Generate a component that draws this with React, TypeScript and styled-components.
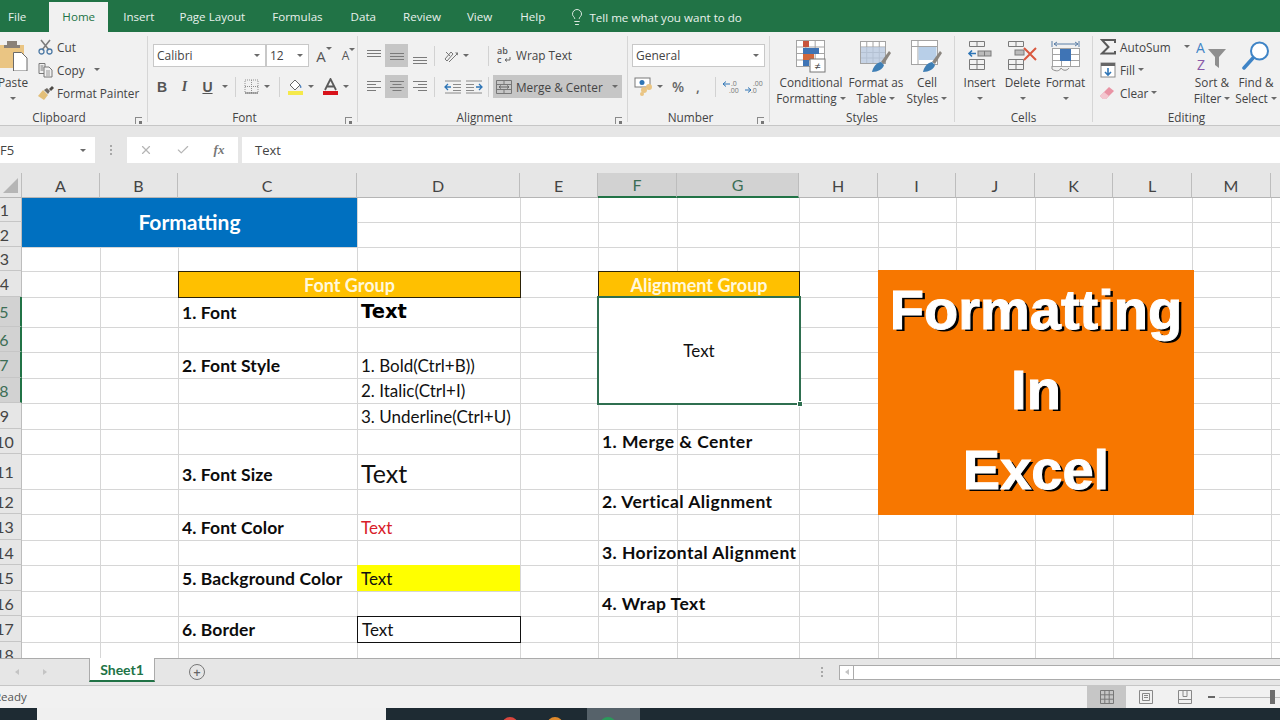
import { FC, ReactNode } from "react";
import styled, { createGlobalStyle } from "styled-components";
import { Check, Lightbulb, X } from "lucide-react";

const GREEN = "#217346";
const UI_FONT = `"Open Sans", "Liberation Sans", sans-serif`;
const SHEET_FONT = `Lato, "Open Sans", sans-serif`;

const GlobalStyle = createGlobalStyle`
    html, body {
        margin: 0;
        padding: 0;
        overflow: hidden;
        background: #ffffff;
    }
`;

/* ---------- drawn icons ---------- */

const Svg: FC<{ w: number; h: number; children: ReactNode }> = ({ w, h, children }) => (
    <svg width={w} height={h} viewBox={`0 0 ${w} ${h}`} fill="none">
        {children}
    </svg>
);

const PasteIcon = () => (
    <Svg w={29} h={31}>
        <rect x="0" y="5" width="25" height="23" fill="#eac583" />
        <rect x="8" y="1" width="10" height="6" fill="#8a8178" />
        <rect x="5" y="5" width="16" height="3" fill="#8a8178" />
        <path d="M14.5 12.5h8l5.5 5.500v13h-13.500z" fill="#fff" stroke="#6a6a6a" />
    </Svg>
);

const CutIcon = () => (
    <Svg w={16} h={16}>
        <path d="M3 1l8 10M12 1L4 11" stroke="#7d7d7d" strokeWidth="1.600" />
        <circle cx="3.500" cy="12.500" r="2.500" stroke="#4f7ba6" strokeWidth="1.300" />
        <circle cx="11.500" cy="12.500" r="2.500" stroke="#4f7ba6" strokeWidth="1.300" />
    </Svg>
);

const CopyIcon = () => (
    <Svg w={16} h={16}>
        <path d="M1 1.500h6v10H1zM2.500 4h3M2.500 6h3M2.500 8h3" stroke="#777" />
        <path d="M6 5h5l3 3v7H6z" fill="#f1f1f1" stroke="#777" />
        <path d="M8 9h4M8 11h4M8 13h4" stroke="#999" />
    </Svg>
);

const PainterIcon = () => (
    <Svg w={16} h={14}>
        <path d="M0 10l5-6 5 5-4 5z" fill="#e3bf78" />
        <path d="M6 4l3-2 3 3-2 3z" fill="#6f6a64" />
        <path d="M11 3l3-3 2 2-3 3z" fill="#4d4a46" />
    </Svg>
);

const BordersIcon = () => (
    <Svg w={15} h={15}>
        <path d="M1 1h13v13H1zM7.500 1v13M1 7.500h13" stroke="#8f8f8f" strokeDasharray="1 1" />
        <path d="M1 14h13" stroke="#6f6f6f" />
    </Svg>
);

const FillIcon = () => (
    <Svg w={17} h={17}>
        <path d="M3 7l5-5 5 5-5 5z" fill="#fff" stroke="#666" />
        <path d="M13 6.500c1.500 1.500 2 3 1 3.500s-1.500-1.500-1-3.500z" fill="#4f81bd" />
        <rect x="1" y="13" width="15" height="4" fill="#f5e94a" />
    </Svg>
);

const FontColorIcon = () => (
    <Svg w={17} h={17}>
        <path d="M3 12L8.500 1 14 12M5 8.500h7" stroke="#5a5a5a" strokeWidth="1.800" />
        <rect x="1" y="13" width="15" height="4" fill="#d8121a" />
    </Svg>
);

const AlignIcon: FC<{ rows: [number, number, number][] }> = ({ rows }) => (
    <Svg w={16} h={16}>
        {rows.map(([x, y, w], i) => (
            <rect key={i} x={x} y={y} width={w} height="1" fill="#7b7b7b" />
        ))}
    </Svg>
);

const vertRows = (top: number): [number, number, number][] => [
    [1, top, 14],
    [1, top + 3, 14],
    [1, top + 6, 14],
];

const OrientationIcon = () => (
    <Svg w={16} h={14}>
        <path d="M2 10l6-7 2 2-6 7zM3 3l4 4" stroke="#777" />
        <path d="M6 13l9-9" stroke="#777" />
        <path d="M15 3.500v3l-3-3z" fill="#777" />
    </Svg>
);

const IndentIcon: FC<{ flip?: boolean }> = ({ flip }) => (
    <Svg w={17} h={14}>
        <g transform={flip ? "translate(17 0) scale(-1 1)" : undefined}>
            <path d="M1 1h16M9 4.500h8M9 7.500h8M9 10.500h8M1 13h16" stroke="#8a8a8a" />
            <path d="M1 7h6M4 4l-3 3 3 3" stroke="#2e75b6" strokeWidth="1.300" />
        </g>
    </Svg>
);

const WrapIcon = () => (
    <Svg w={15} h={18}>
        <text x="0" y="7.500" fontSize="9" fontWeight="600" fill="#555" fontFamily={UI_FONT}>ab</text>
        <text x="0" y="17" fontSize="9" fontWeight="600" fill="#555" fontFamily={UI_FONT}>c</text>
        <path d="M13 11v3H8M10 12.500L8 14l2 1.500" stroke="#666" />
    </Svg>
);

const MergeIcon = () => (
    <Svg w={16} h={14}>
        <path d="M.5.500h15v13H.5zM.5 4.500h15M.5 9.500h15M8 .500v4M8 9.500v4" stroke="#777" />
        <path d="M3 7h10M5 5.500L3 7l2 1.500M11 5.500L13 7l-2 1.500" stroke="#666" />
    </Svg>
);

const AccountingIcon = () => (
    <Svg w={19} h={19}>
        <rect x="1" y="1" width="15" height="9" fill="#fff" stroke="#7a7a7a" />
        <circle cx="8" cy="5.500" r="2.500" fill="#2e75b6" />
        <circle cx="10" cy="13" r="3" fill="#eac583" />
        <circle cx="15" cy="10" r="3" fill="#eac583" />
        <circle cx="8" cy="17" r="2" fill="#eac583" />
    </Svg>
);

const DecimalIcon: FC<{ top: string; bottom: string; arrowTop?: boolean }> = ({ top, bottom, arrowTop }) => (
    <Svg w={20} h={15}>
        <text x="9" y="6.500" fontSize="7" fill="#777" fontFamily={UI_FONT}>{top}</text>
        <text x="7" y="14" fontSize="7" fill="#777" fontFamily={UI_FONT}>{bottom}</text>
        <path d={arrowTop ? "M1 5h7M4 2.500L1 5l3 2.500" : "M1 11h6M4 8.500L7 11l-3 2.500"} stroke="#2e75b6" />
    </Svg>
);

const Table: FC<{ x: number; y: number; w: number; h: number; cols: number; rows: number }> = ({ x, y, w, h, cols, rows }) => (
    <g stroke="#a3a3a3">
        <rect x={x + 0.5} y={y + 0.5} width={w} height={h} fill="#fff" />
        {Array.from({ length: cols - 1 }, (_, i) => (
            <path key={i} d={`M${x + 0.5 + ((i + 1) * w) / cols} ${y}v${h}`} />
        ))}
        {Array.from({ length: rows - 1 }, (_, i) => (
            <path key={i} d={`M${x} ${y + 0.5 + ((i + 1) * h) / rows}h${w}`} />
        ))}
    </g>
);

const Brush = () => (
    <>
        <path d="M21 22l8-11 2 2-7 11z" fill="#8b8680" />
        <path d="M12 32c1-5 4-9 9-10l3 3c-1 4-6 7-12 7z" fill="#3f7fb5" />
    </>
);

const ConditionalIcon = () => (
    <Svg w={32} h={33}>
        <Table x={1} y={0} w={28} h={26} cols={3} rows={4} />
        <rect x="8" y="1" width="6" height="6" fill="#c8553d" />
        <rect x="8" y="8" width="16" height="6" fill="#3f74b5" />
        <rect x="8" y="14" width="11" height="6" fill="#d0683d" />
        <rect x="8" y="20" width="6" height="6" fill="#3f74b5" />
        <rect x="15" y="19" width="15" height="13" fill="#fff" stroke="#777" />
        <text x="22.500" y="29.500" fontSize="11" textAnchor="middle" fill="#444" fontFamily={UI_FONT}>≠</text>
    </Svg>
);

const FormatTableIcon = () => (
    <Svg w={32} h={33}>
        <Table x={0} y={1} w={25} h={22} cols={4} rows={4} />
        <rect x="1" y="7" width="24" height="16" fill="#b8c8de" opacity="0.8" />
        <Brush />
    </Svg>
);

const CellStylesIcon = () => (
    <Svg w={32} h={33}>
        <Table x={0} y={0} w={26} h={24} cols={1} rows={1} />
        <path d="M0 6.500h26M7 0v24" stroke="#a3a3a3" />
        <rect x="7.500" y="7" width="18" height="13" fill="#b8cfe8" />
        <Brush />
    </Svg>
);

const InsertIcon = () => (
    <Svg w={30} h={30}>
        <path d="M4.500 1.500h15v5h-15zM12 1.500v5M4.500 19.500h15v10h-15zM4.500 24.500h15M12 19.500v10" stroke="#7a7a7a" />
        <rect x="13" y="11" width="13" height="5" fill="#bbb" stroke="#7a7a7a" />
        <path d="M19.500 11v5" stroke="#7a7a7a" />
        <path d="M11 13.500H4M7 10.500l-3 3 3 3" stroke="#2e75b6" strokeWidth="1.600" />
    </Svg>
);

const DeleteIcon = () => (
    <Svg w={32} h={30}>
        <path d="M1.500 1.500h15v5h-15zM9 1.500v5M1.500 19.500h15v10h-15zM1.500 24.500h15M9 19.500v10" stroke="#7a7a7a" />
        <rect x="8" y="10" width="9" height="5" fill="#bbb" stroke="#7a7a7a" />
        <path d="M17 8l12 12M29 8L17 20" stroke="#d9583f" strokeWidth="2" />
    </Svg>
);

const FormatCellsIcon = () => (
    <Svg w={30} h={32}>
        <path d="M1 1v6M28 1v6M3 4h24M6 2L3 4l3 2M24 2l3 2-3 2" stroke="#5b7ea6" />
        <Table x={1} y={8} w={27} h={18} cols={3} rows={3} />
        <rect x="9" y="9" width="11" height="12" fill="#3f74b5" />
        <path d="M1 26v3c4 3 8 2 9-1 2 3 6 3 8 0" stroke="#8f8f8f" />
    </Svg>
);

const SigmaIcon = () => (
    <Svg w={16} h={16}>
        <path d="M15 4V1H2l6.500 7L2 14.500h13V12" stroke="#5a5a5a" strokeWidth="2" />
    </Svg>
);

const FillDownIcon = () => (
    <Svg w={16} h={16}>
        <rect x="1" y="1" width="14" height="14" fill="#fff" stroke="#8a8a8a" />
        <rect x="1" y="1" width="14" height="3" fill="#666" />
        <path d="M8 6v7M5 10l3 3 3-3" stroke="#2e75b6" strokeWidth="1.600" />
    </Svg>
);

const EraserIcon = () => (
    <Svg w={15} h={14}>
        <path d="M0 10l9-9 5 4-8 8H3z" fill="#e993a4" />
        <path d="M0 10l4-4 5 4-3 3H3z" fill="#f3c6cf" />
    </Svg>
);

const SortIcon = () => (
    <Svg w={32} h={32}>
        <text x="0" y="13" fontSize="14" fill="#3f84c6" fontFamily={UI_FONT}>A</text>
        <text x="1" y="30" fontSize="14" fill="#8a5aa8" fontFamily={UI_FONT}>Z</text>
        <path d="M12 9h18l-7 8v11l-4-3v-8z" fill="#8f8f8f" />
    </Svg>
);

const FindIcon = () => (
    <Svg w={30} h={30}>
        <circle cx="18.500" cy="11" r="8.500" fill="#fff" stroke="#3f84c6" strokeWidth="2" />
        <path d="M12 18L3 28" stroke="#3f84c6" strokeWidth="3.500" strokeLinecap="round" />
    </Svg>
);

/* ---------- title bar ---------- */

const TabBar = styled.nav`
    height: 32px;
    flex: none;
    display: flex;
    align-items: flex-end;
    padding-left: 8px;
    background: ${GREEN};
    font: 11.6px ${UI_FONT};
    color: #e8f1ec;
`;

const Tab = styled.div<{ $active?: boolean; $gap: number }>`
    height: 30px;
    line-height: 30px;
    margin-right: ${(p) => p.$gap}px;
    padding: ${(p) => (p.$active ? "0 13px" : "0")};
    background: ${(p) => (p.$active ? "#f1f1f1" : "transparent")};
    color: ${(p) => (p.$active ? GREEN : "inherit")};
`;

const TellMe = styled.div`
    display: flex;
    align-items: center;
    gap: 3px;
    height: 30px;
    margin-left: -3px;
`;

/* ---------- ribbon ---------- */

const Ribbon = styled.section`
    height: 94px;
    flex: none;
    box-sizing: border-box;
    display: flex;
    padding-top: 4px;
    background: #f1f1f1;
    border-bottom: 1px solid #c6c6c6;
    font: 11.8px ${UI_FONT};
    color: #444444;
`;

const Group = styled.div<{ $w: number; $last?: boolean }>`
    position: relative;
    flex: none;
    box-sizing: border-box;
    width: ${(p) => p.$w}px;
    height: 86px;
    border-right: ${(p) => (p.$last ? "none" : "1px solid #d6d6d6")};
    display: flex;
    flex-direction: column;
`;

const GroupBody = styled.div<{ $pl?: number; $stack?: boolean; $gap?: number }>`
    height: 74px;
    box-sizing: border-box;
    padding-left: ${(p) => p.$pl ?? 0}px;
    padding-top: ${(p) => (p.$stack ? 8 : 0)}px;
    display: flex;
    flex-direction: ${(p) => (p.$stack ? "column" : "row")};
    gap: ${(p) => p.$gap ?? 0}px;
`;

const GroupLabel = styled.div<{ $pr?: number }>`
    height: 12px;
    line-height: 15px;
    text-align: center;
    padding-right: ${(p) => p.$pr ?? 0}px;
`;

const Launcher = styled.i`
    position: absolute;
    right: 5px;
    bottom: -2px;
    width: 6px;
    height: 6px;
    border-left: 1px solid #8a8a8a;
    border-top: 1px solid #8a8a8a;
    &::after {
        content: "";
        position: absolute;
        right: 0;
        bottom: 0;
        width: 3px;
        height: 3px;
        background: #777;
    }
`;

const ToolRow = styled.div<{ $ml?: number }>`
    height: 23px;
    display: flex;
    align-items: center;
    margin-left: ${(p) => p.$ml ?? 0}px;
`;

const Slot = styled.div<{ $w: number; $active?: boolean }>`
    width: ${(p) => p.$w}px;
    height: 23px;
    flex: none;
    display: flex;
    align-items: center;
    justify-content: center;
    background: ${(p) => (p.$active ? "#c6c6c6" : "transparent")};
`;

const Caret = styled.i`
    display: inline-block;
    flex: none;
    border-left: 3px solid transparent;
    border-right: 3px solid transparent;
    border-top: 3px solid #6a6a6a;
`;

const Divider = styled.i<{ $l: number; $r: number }>`
    flex: none;
    width: 1px;
    height: 20px;
    margin: 0 ${(p) => p.$r}px 0 ${(p) => p.$l}px;
    background: #d2d2d2;
`;

const Combo = styled.div<{ $w: number }>`
    width: ${(p) => p.$w}px;
    height: 23px;
    flex: none;
    box-sizing: border-box;
    display: flex;
    align-items: center;
    justify-content: space-between;
    padding: 0 5px 0 3px;
    background: #ffffff;
    border: 1px solid #c8c8c8;
    font-size: 12px;
`;

const BigButton = styled.div<{ $w: number }>`
    width: ${(p) => p.$w}px;
    flex: none;
    display: flex;
    flex-direction: column;
    align-items: center;
    padding-top: 4px;
`;

const BigIcon = styled.div`
    height: 32px;
    margin-bottom: 2px;
    display: flex;
    justify-content: center;
`;

const BigLine = styled.div`
    height: 16px;
    line-height: 16px;
    white-space: nowrap;
    display: flex;
    align-items: center;
    justify-content: center;
    gap: 3px;
`;

const SmallColumn = styled.div<{ $w: number; $ml: number }>`
    width: ${(p) => p.$w}px;
    height: 69px;
    margin-left: ${(p) => p.$ml}px;
    margin-top: -1px;
    flex: none;
    display: flex;
    flex-direction: column;
`;

const SmallAction = styled.div<{ $icon: number; $caretGap?: number }>`
    height: 23px;
    display: flex;
    align-items: center;
    white-space: nowrap;
    & > span:first-child {
        width: ${(p) => p.$icon}px;
        flex: none;
        display: flex;
        align-items: center;
    }
    ${Caret} {
        margin-left: ${(p) => p.$caretGap ?? 3}px;
    }
`;

const GrowLetter = styled.span<{ $size: number }>`
    position: relative;
    font-size: ${(p) => p.$size}px;
    color: #555;
    ${Caret} {
        position: absolute;
        top: 1px;
        right: -6px;
    }
`;

const StyleTool = styled.span<{ $kind: "b" | "i" | "u" }>`
    font-family: ${(p) => (p.$kind === "i" ? `"Liberation Serif", serif` : `"Liberation Sans", sans-serif`)};
    font-weight: 700;
    font-size: 14px;
    color: #555;
    font-style: ${(p) => (p.$kind === "i" ? "italic" : "normal")};
    text-decoration: ${(p) => (p.$kind === "u" ? "underline" : "none")};
`;

const PercentMark = styled.span<{ $size: number }>`
    font-size: ${(p) => p.$size}px;
    font-weight: 600;
    color: #666;
`;

const MergeButton = styled.div`
    width: 129px;
    height: 23px;
    flex: none;
    box-sizing: border-box;
    display: flex;
    align-items: center;
    gap: 4px;
    padding-left: 3px;
    background: #c6c6c6;
    white-space: nowrap;
    ${Caret} {
        margin-left: 5px;
    }
`;

const WrapButton = styled.div`
    display: flex;
    align-items: center;
    gap: 4px;
    white-space: nowrap;
    padding-left: 4px;
    margin-top: -1px;
`;

/* ---------- formula bar ---------- */

const FormulaStrip = styled.section`
    height: 47px;
    flex: none;
    box-sizing: border-box;
    padding-top: 11px;
    background: #e6e6e6;
    display: flex;
    font: 12px ${UI_FONT};
    color: #444;
`;

const FormulaBox = styled.div<{ $w?: number; $ml: number }>`
    height: 26px;
    box-sizing: border-box;
    margin-left: ${(p) => p.$ml}px;
    width: ${(p) => (p.$w ? `${p.$w}px` : "auto")};
    flex: ${(p) => (p.$w ? "none" : "1")};
    background: #ffffff;
    display: flex;
    align-items: center;
    justify-content: space-between;
    padding: 0 9px 0 0;
    font-size: 13px;
`;

const GripDots = styled.i<{ $l: number }>`
    width: 2px;
    height: 10px;
    flex: none;
    margin: 8px 0 0 ${(p) => p.$l}px;
    background: repeating-linear-gradient(#a8a8a8 0 2px, transparent 2px 4px);
`;

const FxMark = styled.span`
    font: italic 700 13px "Liberation Serif", serif;
    color: #777;
`;

/* ---------- sheet ---------- */

const Sheet = styled.main`
    position: relative;
    flex: 1;
    min-height: 0;
    overflow: hidden;
    background: #ffffff;
`;

const COLS = [22, 78, 78, 179, 163, 78, 79, 122, 79, 78, 79, 78, 79, 79, 80];
const ROWS = [25, 24, 25, 24, 26, 30, 25, 26, 25, 26, 25, 35, 25, 26, 25, 26, 25, 26, 25];
const LETTERS = ["A", "B", "C", "D", "E", "F", "G", "H", "I", "J", "K", "L", "M", "N"];

const Grid = styled.div`
    display: grid;
    grid-template-columns: ${COLS.map((c) => `${c}px`).join(" ")};
    grid-template-rows: ${ROWS.map((r) => `${r}px`).join(" ")};
    font: 17px ${SHEET_FONT};
    color: #111;
`;

const GridCell = styled.div<{ $c: number; $r: number }>`
    grid-column: ${(p) => p.$c};
    grid-row: ${(p) => p.$r};
    box-sizing: border-box;
    border-left: ${(p) => (p.$c > 2 ? "1px solid #d6d6d6" : "none")};
    border-top: ${(p) => (p.$r > 2 ? "1px solid #d6d6d6" : "none")};
`;

const Corner = styled.div`
    grid-column: 1;
    grid-row: 1;
    background: #e6e6e6;
    border-right: 1px solid #bdbdbd;
    border-bottom: 1px solid #b5b5b5;
    display: flex;
    align-items: flex-end;
    justify-content: flex-end;
    padding: 0 3px 4px 0;
    box-sizing: border-box;
`;

const CornerMark = styled.i`
    width: 0;
    height: 0;
    border-left: 15px solid transparent;
    border-bottom: 15px solid #b5b5b5;
`;

const ColHead = styled.div<{ $c: number; $sel?: boolean }>`
    grid-column: ${(p) => p.$c};
    grid-row: 1;
    box-sizing: border-box;
    display: flex;
    align-items: center;
    justify-content: center;
    font: 16px ${SHEET_FONT};
    background: ${(p) => (p.$sel ? "#d2d2d2" : "#e6e6e6")};
    color: ${(p) => (p.$sel ? "#3c6e55" : "#444")};
    border-right: 1px solid #bdbdbd;
    border-bottom: ${(p) => (p.$sel ? `2px solid ${GREEN}` : "1px solid #b5b5b5")};
`;

const RowHead = styled.div<{ $r: number; $sel?: boolean }>`
    grid-column: 1;
    grid-row: ${(p) => p.$r};
    box-sizing: border-box;
    overflow: hidden;
    display: flex;
    align-items: center;
    justify-content: center;
    padding-right: 12px;
    font-size: 16px;
    background: ${(p) => (p.$sel ? "#d2d2d2" : "#e6e6e6")};
    color: ${(p) => (p.$sel ? "#3c6e55" : "#444")};
    border-right: ${(p) => (p.$sel ? `2px solid ${GREEN}` : "1px solid #bdbdbd")};
    border-bottom: 1px solid #c6c6c6;
`;

const Item = styled.div<{
    $c: number;
    $r: number;
    $cs?: number;
    $rs?: number;
    $pt?: number;
    $center?: boolean;
}>`
    grid-column: ${(p) => p.$c} / span ${(p) => p.$cs ?? 1};
    grid-row: ${(p) => p.$r} / span ${(p) => p.$rs ?? 1};
    z-index: 1;
    box-sizing: border-box;
    display: flex;
    align-items: center;
    justify-content: ${(p) => (p.$center ? "center" : "flex-start")};
    padding: ${(p) => p.$pt ?? 0}px 0 0 ${(p) => (p.$center ? 0 : 4)}px;
    white-space: nowrap;
`;

const Label = styled(Item)`
    font-weight: 700;
    font-size: 17.5px;
    letter-spacing: 0.1px;
    color: #0c0c0c;
`;

const AlignLabel = styled(Label)`
    letter-spacing: 0.45px;
`;

const Banner = styled(Item)`
    background: #0070c0;
    color: #ffffff;
    font-weight: 700;
    font-size: 21px;
    padding-bottom: 2px;
`;

const GroupHeader = styled(Item)`
    margin: 0 -1px -1px 0;
    background: #ffc000;
    color: #fff8dc;
    font-weight: 700;
    font-size: 18px;
    border: 1px solid #2b2208;
`;

const FontSample = styled(Item)`
    font: 700 19.5px "DejaVu Sans", sans-serif;
    color: #000;
    padding-bottom: 2px;
`;

const LargeSample = styled(Item)`
    font-size: 25px;
`;

const RedSample = styled(Item)`
    color: #d8202a;
`;

const YellowSample = styled(Item)`
    background: #ffff00;
`;

const BorderSample = styled(Item)`
    margin: 0 -1px -1px 0;
    border: 1px solid #111;
    padding-left: 4px;
`;

const Selection = styled(Item)`
    position: relative;
    z-index: 2;
    margin: -1px -2px -2px -1px;
    border: 2px solid #2f6f50;
    background: #ffffff;
    &::after {
        content: "";
        position: absolute;
        right: -4px;
        bottom: -4px;
        width: 4px;
        height: 4px;
        background: #2f6f50;
        border: 1px solid #fff;
    }
`;

const ThumbCard = styled.aside`
    position: absolute;
    left: 878px;
    top: 97px;
    z-index: 3;
    width: 316px;
    height: 245px;
    box-sizing: border-box;
    padding-bottom: 6px;
    background: #f77700;
    display: flex;
    flex-direction: column;
    align-items: center;
    justify-content: center;
    font: 700 56px/80px "Liberation Sans", Arial, sans-serif;
    color: #ffffff;
    -webkit-text-stroke: 1px #ffffff;
    text-shadow: 3px 2px 0 #000;
`;

/* ---------- bottom bars ---------- */

const SheetBar = styled.footer`
    height: 28px;
    flex: none;
    box-sizing: border-box;
    display: flex;
    background: #e6e6e6;
    border-top: 1px solid #ababab;
    border-bottom: 1px solid #c6c6c6;
`;

const NavArrow = styled.i<{ $dir: "l" | "r"; $ml: number }>`
    flex: none;
    align-self: center;
    margin-left: ${(p) => p.$ml}px;
    border-top: 3px solid transparent;
    border-bottom: 3px solid transparent;
    ${(p) => (p.$dir === "l" ? "border-right" : "border-left")}: 4px solid #c4c4c4;
`;

const SheetTab = styled.div`
    width: 66px;
    height: 24px;
    margin-left: 42px;
    flex: none;
    box-sizing: border-box;
    background: #ffffff;
    border-bottom: 2px solid ${GREEN};
    border-left: 1px solid #ababab;
    border-right: 1px solid #ababab;
    margin-top: -1px;
    display: flex;
    align-items: center;
    justify-content: center;
    font: 700 14px ${SHEET_FONT};
    color: ${GREEN};
`;

const AddSheet = styled.div`
    width: 16px;
    height: 16px;
    flex: none;
    align-self: center;
    box-sizing: border-box;
    margin-left: 34px;
    border: 1px solid #777;
    border-radius: 50%;
    display: flex;
    align-items: center;
    justify-content: center;
    font: 600 13px/1 ${UI_FONT};
    color: #666;
`;

const ScrollTrack = styled.div`
    height: 15px;
    flex: 1;
    align-self: center;
    margin-left: 16px;
    box-sizing: border-box;
    background: #ffffff;
    border: 1px solid #ababab;
    border-right: none;
    display: flex;
    align-items: center;
`;

const ScrollButton = styled.div`
    width: 14px;
    height: 100%;
    box-sizing: border-box;
    border-right: 1px solid #ababab;
    display: flex;
    align-items: center;
    justify-content: center;
`;

const StatusBar = styled.footer`
    height: 22px;
    flex: none;
    box-sizing: border-box;
    display: flex;
    align-items: stretch;
    background: #f1f1f1;
    font: 11.5px/22px ${UI_FONT};
    color: #555;
`;

const StatusText = styled.span`
    margin-left: -6px;
    flex: 1;
`;

const ViewButton = styled.div<{ $active?: boolean }>`
    width: 39px;
    flex: none;
    display: flex;
    align-items: center;
    justify-content: center;
    background: ${(p) => (p.$active ? "#c6c6c6" : "transparent")};
`;

const ZoomArea = styled.div`
    width: 76px;
    flex: none;
    position: relative;
    display: flex;
    align-items: center;
    padding-left: 4px;
    box-sizing: border-box;
`;

const ZoomMinus = styled.i`
    width: 7px;
    height: 2px;
    background: #666;
`;

const ZoomTrack = styled.i`
    flex: 1;
    height: 1px;
    margin-left: 4px;
    background: #bdbdbd;
`;

const ZoomThumb = styled.i`
    position: absolute;
    left: 66px;
    top: 4px;
    width: 5px;
    height: 14px;
    background: #6e6e6e;
`;

const Taskbar = styled.div`
    height: 12px;
    flex: none;
    display: flex;
    overflow: hidden;
    background: #1e2b33;
`;

const TaskSegment = styled.div<{ $w: number; $bg?: string; $pl?: number }>`
    width: ${(p) => p.$w}px;
    height: 12px;
    flex: none;
    box-sizing: border-box;
    padding-left: ${(p) => p.$pl ?? 0}px;
    background: ${(p) => p.$bg ?? "transparent"};
    display: flex;
    gap: 29px;
`;

const TaskDot = styled.i<{ $bg: string }>`
    width: 16px;
    height: 16px;
    margin-top: 9px;
    flex: none;
    border-radius: 50%;
    background: ${(p) => p.$bg};
`;

const Page = styled.div`
    width: 1280px;
    height: 720px;
    overflow: hidden;
    display: flex;
    flex-direction: column;
`;

/* ---------- data ---------- */

const TABS: [string, number][] = [
    ["File", 23],
    ["Home", 15],
    ["Insert", 25],
    ["Page Layout", 27],
    ["Formulas", 28],
    ["Data", 27],
    ["Review", 26],
    ["View", 28],
    ["Help", 26],
];

const Big: FC<{ w: number; icon: ReactNode; top: string; bottom?: string; caret?: boolean }> = ({ w, icon, top, bottom, caret }) => (
    <BigButton $w={w}>
        <BigIcon>{icon}</BigIcon>
        <BigLine>{top}</BigLine>
        <BigLine>
            {bottom}
            {caret && <Caret />}
        </BigLine>
    </BigButton>
);

const GridLines = () => (
    <>
        {ROWS.slice(1).map((_, r) =>
            COLS.slice(1).map((_, c) => <GridCell key={`${r}-${c}`} $c={c + 2} $r={r + 2} />)
        )}
    </>
);

export default function App() {
    return (
        <Page>
            <GlobalStyle />

            <TabBar>
                {TABS.map(([name, gap]) => (
                    <Tab key={name} $gap={gap} $active={name === "Home"}>{name}</Tab>
                ))}
                <TellMe>
                    <Lightbulb size={18} strokeWidth={1.2} color="#f0f5f2" />
                    Tell me what you want to do
                </TellMe>
            </TabBar>

            <Ribbon>
                <Group $w={148}>
                    <GroupBody>
                        <Big w={26} icon={<PasteIcon />} top="Paste" caret />
                        <SmallColumn $w={100} $ml={12}>
                            <SmallAction $icon={19}><span><CutIcon /></span>Cut</SmallAction>
                            <SmallAction $icon={19} $caretGap={9}><span><CopyIcon /></span>Copy<Caret /></SmallAction>
                            <SmallAction $icon={19}><span><PainterIcon /></span>Format Painter</SmallAction>
                        </SmallColumn>
                    </GroupBody>
                    <GroupLabel $pr={29}>Clipboard</GroupLabel>
                    <Launcher />
                </Group>

                <Group $w={210}>
                    <GroupBody $pl={5} $stack $gap={8}>
                        <ToolRow>
                            <Combo $w={113}>Calibri<Caret /></Combo>
                            <Combo $w={43}>12<Caret /></Combo>
                            <Slot $w={24}><GrowLetter $size={15}>A<Caret /></GrowLetter></Slot>
                            <Slot $w={25}><GrowLetter $size={12}>A<Caret /></GrowLetter></Slot>
                        </ToolRow>
                        <ToolRow $ml={-2}>
                            <Slot $w={22}><StyleTool $kind="b">B</StyleTool></Slot>
                            <Slot $w={23}><StyleTool $kind="i">I</StyleTool></Slot>
                            <Slot $w={23}><StyleTool $kind="u">U</StyleTool></Slot>
                            <Slot $w={11}><Caret /></Slot>
                            <Divider $l={5} $r={4} />
                            <Slot $w={22}><BordersIcon /></Slot>
                            <Slot $w={10}><Caret /></Slot>
                            <Divider $l={7} $r={6} />
                            <Slot $w={18}><FillIcon /></Slot>
                            <Slot $w={14}><Caret /></Slot>
                            <Slot $w={24}><FontColorIcon /></Slot>
                            <Slot $w={8}><Caret /></Slot>
                        </ToolRow>
                    </GroupBody>
                    <GroupLabel $pr={16}>Font</GroupLabel>
                    <Launcher />
                </Group>

                <Group $w={270}>
                    <GroupBody $pl={4} $stack $gap={8}>
                        <ToolRow>
                            <Slot $w={23}><AlignIcon rows={vertRows(2)} /></Slot>
                            <Slot $w={23} $active><AlignIcon rows={vertRows(5)} /></Slot>
                            <Slot $w={23}><AlignIcon rows={vertRows(9)} /></Slot>
                            <Divider $l={3} $r={6} />
                            <Slot $w={20}><OrientationIcon /></Slot>
                            <Slot $w={10}><Caret /></Slot>
                            <Divider $l={17} $r={4} />
                            <WrapButton>
                                <WrapIcon />
                                Wrap Text
                            </WrapButton>
                        </ToolRow>
                        <ToolRow>
                            <Slot $w={23}><AlignIcon rows={[[1, 2, 14], [1, 5, 9], [1, 8, 14], [1, 11, 9]]} /></Slot>
                            <Slot $w={23} $active><AlignIcon rows={[[1, 2, 14], [3.500, 5, 9], [1, 8, 14], [3.500, 11, 9]]} /></Slot>
                            <Slot $w={23}><AlignIcon rows={[[1, 2, 14], [6, 5, 9], [1, 8, 14], [6, 11, 9]]} /></Slot>
                            <Divider $l={3} $r={6} />
                            <Slot $w={22}><IndentIcon /></Slot>
                            <Slot $w={22}><IndentIcon flip /></Slot>
                            <Divider $l={3} $r={4} />
                            <MergeButton><MergeIcon />Merge &amp; Center<Caret /></MergeButton>
                        </ToolRow>
                    </GroupBody>
                    <GroupLabel $pr={16}>Alignment</GroupLabel>
                    <Launcher />
                </Group>

                <Group $w={142}>
                    <GroupBody $pl={4} $stack $gap={8}>
                        <ToolRow>
                            <Combo $w={133}>General<Caret /></Combo>
                        </ToolRow>
                        <ToolRow>
                            <Slot $w={23}><AccountingIcon /></Slot>
                            <Slot $w={10}><Caret /></Slot>
                            <Slot $w={26}><PercentMark $size={14}>%</PercentMark></Slot>
                            <Slot $w={14}><PercentMark $size={14}>,</PercentMark></Slot>
                            <Divider $l={10} $r={5} />
                            <Slot $w={22}><DecimalIcon top=".0" bottom=".00" arrowTop /></Slot>
                            <Slot $w={22}><DecimalIcon top=".00" bottom=".0" /></Slot>
                        </ToolRow>
                    </GroupBody>
                    <GroupLabel $pr={16}>Number</GroupLabel>
                    <Launcher />
                </Group>

                <Group $w={185}>
                    <GroupBody $pl={7}>
                        <Big w={68} icon={<ConditionalIcon />} top="Conditional" bottom="Formatting" caret />
                        <Big w={62} icon={<FormatTableIcon />} top="Format as" bottom="Table" caret />
                        <Big w={40} icon={<CellStylesIcon />} top="Cell" bottom="Styles" caret />
                    </GroupBody>
                    <GroupLabel>Styles</GroupLabel>
                </Group>

                <Group $w={138}>
                    <GroupBody $pl={3}>
                        <Big w={43} icon={<InsertIcon />} top="Insert" caret />
                        <Big w={43} icon={<DeleteIcon />} top="Delete" caret />
                        <Big w={43} icon={<FormatCellsIcon />} top="Format" caret />
                    </GroupBody>
                    <GroupLabel>Cells</GroupLabel>
                </Group>

                <Group $w={187} $last>
                    <GroupBody>
                        <SmallColumn $w={90} $ml={7}>
                            <SmallAction $icon={20} $caretGap={13}><span><SigmaIcon /></span>AutoSum<Caret /></SmallAction>
                            <SmallAction $icon={20}><span><FillDownIcon /></span>Fill<Caret /></SmallAction>
                            <SmallAction $icon={20}><span><EraserIcon /></span>Clear<Caret /></SmallAction>
                        </SmallColumn>
                        <Big w={44} icon={<SortIcon />} top="Sort &" bottom="Filter" caret />
                        <Big w={44} icon={<FindIcon />} top="Find &" bottom="Select" caret />
                    </GroupBody>
                    <GroupLabel>Editing</GroupLabel>
                </Group>
            </Ribbon>

            <FormulaStrip>
                <FormulaBox $w={95} $ml={0}>F5<Caret /></FormulaBox>
                <GripDots $l={15} />
                <FormulaBox $w={111} $ml={15}>
                    <Slot $w={38}><X size={14} color="#b5b5b5" /></Slot>
                    <Slot $w={36}><Check size={14} color="#b5b5b5" /></Slot>
                    <Slot $w={36}><FxMark>fx</FxMark></Slot>
                </FormulaBox>
                <FormulaBox $ml={4}>
                    <Slot $w={52}>Text</Slot>
                </FormulaBox>
            </FormulaStrip>

            <Sheet>
                <Grid>
                    <Corner><CornerMark /></Corner>
                    {LETTERS.map((l, i) => (
                        <ColHead key={l} $c={i + 2} $sel={l === "F" || l === "G"}>{l}</ColHead>
                    ))}
                    {ROWS.slice(1).map((_, i) => (
                        <RowHead key={i} $r={i + 2} $sel={i >= 4 && i <= 7}>{i + 1}</RowHead>
                    ))}
                    <GridLines />

                    <Banner $c={2} $r={2} $cs={3} $rs={2} $center>Formatting</Banner>

                    <GroupHeader $c={4} $r={5} $cs={2} $center>Font Group</GroupHeader>
                    <Label $c={4} $r={6}>1. Font</Label>
                    <FontSample $c={5} $r={6}>Text</FontSample>
                    <Label $c={4} $r={8}>2. Font Style</Label>
                    <Item $c={5} $r={8}>1. Bold(Ctrl+B))</Item>
                    <Item $c={5} $r={9}>2. Italic(Ctrl+I)</Item>
                    <Item $c={5} $r={10}>3. Underline(Ctrl+U)</Item>
                    <Label $c={4} $r={12} $pt={6}>3. Font Size</Label>
                    <LargeSample $c={5} $r={12} $pt={2}>Text</LargeSample>
                    <Label $c={4} $r={14}>4. Font Color</Label>
                    <RedSample $c={5} $r={14}>Text</RedSample>
                    <Label $c={4} $r={16}>5. Background Color</Label>
                    <YellowSample $c={5} $r={16}>Text</YellowSample>
                    <Label $c={4} $r={18}>6. Border</Label>
                    <BorderSample $c={5} $r={18}>Text</BorderSample>

                    <GroupHeader $c={7} $r={5} $cs={2} $center>Alignment Group</GroupHeader>
                    <Selection $c={7} $r={6} $cs={2} $rs={4} $center>Text</Selection>
                    <AlignLabel $c={7} $r={11} $cs={2}>1. Merge &amp; Center</AlignLabel>
                    <AlignLabel $c={7} $r={13} $cs={2}>2. Vertical Alignment</AlignLabel>
                    <AlignLabel $c={7} $r={15} $cs={2}>3. Horizontal Alignment</AlignLabel>
                    <AlignLabel $c={7} $r={17} $cs={2}>4. Wrap Text</AlignLabel>
                </Grid>

                <ThumbCard>
                    <span>Formatting</span>
                    <span>In</span>
                    <span>Excel</span>
                </ThumbCard>
            </Sheet>

            <SheetBar>
                <NavArrow $dir="l" $ml={15} />
                <NavArrow $dir="r" $ml={24} />
                <SheetTab>Sheet1</SheetTab>
                <AddSheet>+</AddSheet>
                <GripDots $l={616} />
                <ScrollTrack>
                    <ScrollButton><NavArrow $dir="l" $ml={0} /></ScrollButton>
                </ScrollTrack>
            </SheetBar>

            <StatusBar>
                <StatusText>Ready</StatusText>
                <ViewButton $active>
                    <Svg w={14} h={14}><path d="M.5.500h13v13H.5zM4.800.500v13M9.200.500v13M.5 4.800h13M.5 9.200h13" stroke="#777" /></Svg>
                </ViewButton>
                <ViewButton>
                    <Svg w={14} h={14}><path d="M.5.500h13v13H.5zM3.500 3.500h7v7h-7zM5 5.500h4M5 7.500h4" stroke="#888" /></Svg>
                </ViewButton>
                <ViewButton>
                    <Svg w={14} h={14}><path d="M.5.500h13v13H.5zM.5 9.500h13M5 .500v6h4v-6" stroke="#888" /></Svg>
                </ViewButton>
                <ZoomArea>
                    <ZoomMinus />
                    <ZoomTrack />
                    <ZoomThumb />
                </ZoomArea>
            </StatusBar>

            <Taskbar>
                <TaskSegment $w={37} />
                <TaskSegment $w={349} $bg="#f0f0f0" />
                <TaskSegment $w={201} $pl={116}>
                    <TaskDot $bg="#d9463e" />
                    <TaskDot $bg="#e08a2c" />
                </TaskSegment>
                <TaskSegment $w={53} $bg="#56626a" $pl={13}>
                    <TaskDot $bg="#2b9a5b" />
                </TaskSegment>
            </Taskbar>
        </Page>
    );
}
